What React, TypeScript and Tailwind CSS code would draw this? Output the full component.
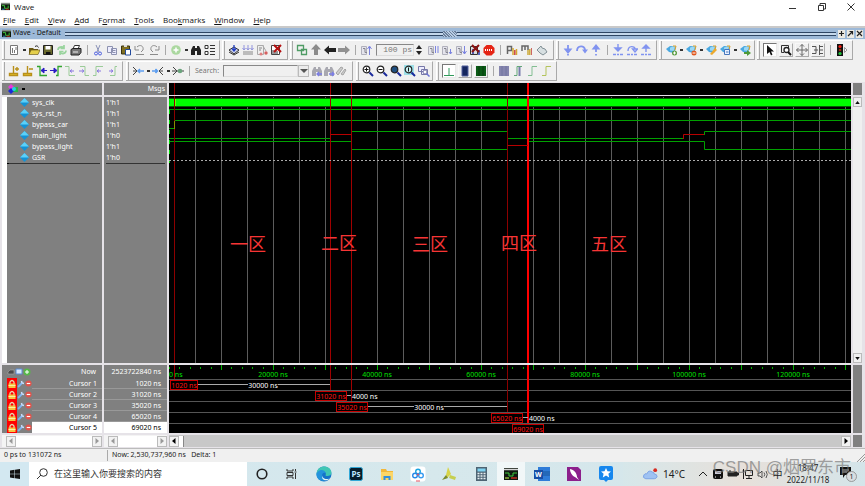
import type { ReactNode } from 'react';

const sans = 'font-["Noto_Sans","Noto_Sans_CJK_SC",sans-serif]';
const uiSans = 'font-["Open_Sans","Noto_Sans_CJK_SC",sans-serif]';

const menus = ['File', 'Edit', 'View', 'Add', 'Format', 'Tools', 'Bookmarks', 'Window', 'Help'];
const menuKeys = [0, 0, 0, 0, 1, 0, 3, 0, 0];

const signals = [
  { name: 'sys_clk', value: "1'h1" },
  { name: 'sys_rst_n', value: "1'h1" },
  { name: 'bypass_car', value: "1'h1" },
  { name: 'main_light', value: "1'h0" },
  { name: 'bypass_light', value: "1'h1" },
  { name: 'GSR', value: "1'h0" },
];

const cursors = [
  { name: 'Cursor 1', time: 1020 },
  { name: 'Cursor 2', time: 31020 },
  { name: 'Cursor 3', time: 35020 },
  { name: 'Cursor 4', time: 65020 },
  { name: 'Cursor 5', time: 69020 },
];

const zones = [
  { text: '一区', x: 61, y: 168 },
  { text: '二区', x: 152, y: 167 },
  { text: '三区', x: 243, y: 168 },
  { text: '四区', x: 332, y: 167 },
  { text: '五区', x: 422, y: 168 },
];

const gridTimes = Array.from({ length: 26 }, (_, i) => (i + 1) * 5000);
const tickTimes = Array.from({ length: 66 }, (_, i) => i * 2000);
const bigTimes = Array.from({ length: 13 }, (_, i) => (i + 1) * 10000);
const labelTimes = [20000, 40000, 60000, 80000, 100000, 120000];

// time in ns to pixels
const px = (t: number) => Math.round(t * 0.0052);

const flag = (
  <>
    <path d="M1 5 5 2l6 .5L9 9 4 8z" fill="#4aa8e0" />
    <path d="M5 3.5 10 2l-1 5-4-.5z" fill="#9bd8f5" />
    <path d="M8 2h3l-1 4" fill="none" stroke="#d8a02a" />
  </>
);
const sheet = (
  <>
    <path d="M1.5 2.5h5v8h-5z" fill="#e4e4ec" stroke="#b0b0bc" />
    <path d="M3 4.500h2v4h2" fill="none" stroke="#85858f" />
  </>
);
const lens = (fill: string) => (
  <>
    <circle cx="4.500" cy="4.500" r="3.300" fill={fill} stroke="#222" strokeWidth="1.200" />
    <path d="m7.500 7.500 3.500 3.500" stroke="#1a2a9c" strokeWidth="2" />
  </>
);
const base = <path d="M1 10.500h3M5 10.500h2M8 10.500h3" stroke="#8093f0" strokeWidth="1.600" />;
const bino = (c: string) => <path d="M1 11V6l2-4h2v2h2V2h2l2 4v5H7V7H5v4z" fill={c} />;

const icons: Record<string, ReactNode> = {
  New: <><path d="M2.500 1.500h7v9h-7z" fill="#fff" stroke="#777" /><path d="M4.500 4v5M6.500 6v3M8 3v3" stroke="#777" /></>,
  Open: <><path d="M1 4h4l1 1h4v5H1z" fill="#6b5a12" /><path d="M3 6h9l-2 4.500H1z" fill="#e4cf4c" stroke="#5a4a10" strokeWidth=".6" /><path d="M7 2.500c2-1.500 3 0 3.500 1" fill="none" stroke="#222" /></>,
  Save: <><path d="M1.500 1.500h9v9h-9z" fill="#68682c" stroke="#222" /><path d="M3.500 2h5v3.500h-5z" fill="#fff" /><path d="M4 8h4.500v2.500H4z" fill="#111" /></>,
  Refresh: <path d="M2 6c0-3 4-4 6-2M10 6.500c0 3-4 4-6 2M8 1v3.500H4.500M4 11V7.500h3.500" fill="none" stroke="#9ad49e" strokeWidth="1.700" />,
  Print: <><path d="M3 5 4.500 1.500h5L8 5" fill="#fff" stroke="#333" /><path d="M1 5.500 3 4.500h8v4L9 11H1z" fill="#777" stroke="#222" /><path d="M3 8h5" stroke="#eee" /></>,
  Cut: <><path d="m4 1 3 7M8 1 5 8" stroke="#8b93b8" /><circle cx="4" cy="9.500" r="1.500" fill="none" stroke="#4d5fe0" /><circle cx="8" cy="9.500" r="1.500" fill="none" stroke="#4d5fe0" /></>,
  Copy: <path d="M1.500 2.500h5v6h-5zM5.500 4.500h5v6h-5zM7 6.500h2.500M7 8.500h2.500" fill="#eef" stroke="#8d92b0" />,
  Paste: <><path d="M1.500 2h8v8h-8z" fill="#807020" stroke="#3a3410" /><path d="M4 1h3v2H4z" fill="#ddd" /><path d="M5.500 5.500h5v5.500h-5z" fill="#fff" stroke="#224a9c" /></>,
  Undo: <path d="M3 3c3-3 7-1 6 3L7 8M1 2v4h4M2 10.500h8" fill="none" stroke="#8b8b8b" />,
  Redo: <path d="M9 3C6 0 2 2 3 6l2 2M11 2v4H7M2 10.500h8" fill="none" stroke="#8b8b8b" />,
  'Add item': <><circle cx="6" cy="6" r="4.800" fill="#abd8a0" /><path d="M6 3.500v5M3.500 6h5" stroke="#fff" strokeWidth="1.500" /></>,
  Find: bino('#222'),
  Collapse: <><path d="M1 1.500h3v3H1zM1 7.500h3v3H1z" fill="#fff" stroke="#333" /><path d="M6 1.500h5M6 4.500h5M6 7.500h5M6 10.500h5" stroke="#333" /></>,
  Compile: <><path d="m1 6 5-3 5 3-5 4z" fill="#ccd2ea" stroke="#333" /><path d="m1 8 5 3 5-3" fill="none" stroke="#333" /><path d="M6 1v5M4 4.500 6 7l2-2.500" stroke="#223fc4" fill="none" strokeWidth="1.300" /></>,
  'Compile all': <><path d="M2 1v5M6 1v5M10 1v5M.500 4 2 6l1.500-2M4.500 4 6 6l1.500-2M8.500 4 10 6l1.500-2" stroke="#9294dd" fill="none" /><path d="M1 8h10M1 10h10" stroke="#aaa" strokeWidth="1.300" /></>,
  Simulate: <><path d="M1.500 1.500h6v9h-6z" fill="#eee" stroke="#aaa" /><path d="M3 4h3M3 6h2" stroke="#888" /><circle cx="5" cy="10" r="1.500" fill="#e08080" /><circle cx="10" cy="9" r="1.700" fill="#d46060" /><path d="m7 2 3 5" stroke="#aaa" /></>,
  Break: <><path d="M1.500 1.500h8v9h-8z" fill="#fff" stroke="#444" /><path d="M3 6v4M5 7v3M7 7v3" stroke="#333" /><path d="m4 1 7 7M11 1 4 8" stroke="#b41010" strokeWidth="2" /></>,
  Environment: <path d="M1.500 1.500h6v5h-6zM5.500 5.500h5v5h-5z" fill="none" stroke="#4f9c65" strokeWidth="1.300" />,
  Up: <path d="M6 0 1 5.500h3V11h4V5.500h3z" fill="#8b8b8b" />,
  Back: <path d="M0 6 5 1.500V4h7v4H5v2.500z" fill="#222" />,
  Forward: <path d="M12 6 7 1.500V4H0v4h7v2.500z" fill="#919191" />,
  Restart: <>{sheet}<path d="M9.500 11V3M7.500 5l2-3 2 3" fill="none" stroke="#7b83e0" /></>,
  Run: <>{sheet}<path d="M8.500 2v7M11 2v7" stroke="#7b83e0" /></>,
  'Continue run': <>{sheet}<path d="M9.500 5v5M8 8l1.500 2L11 8" fill="none" stroke="#7b83e0" /></>,
  'Run all': <>{sheet}<path d="M9.500 2v8M7.500 7l2 3 2-3" fill="none" stroke="#7b83e0" /></>,
  'Break run': <><path d="M1.500 2.500h7v8h-7z" fill="#ddd" stroke="#333" /><path d="M10 6v5M4 5v5" stroke="#2638b0" strokeWidth="1.500" /><path d="m3 1 7 7M10 1 3 8" stroke="#8b1212" strokeWidth="2" /></>,
  Stop: <><path d="M3.500 1h5L11.500 4v4.500l-3 3h-5l-3-3V4z" fill="#e52415" /><path d="M2.500 5v2M4.500 5v2M6.500 5v2M8.500 5v2" stroke="#fff" /></>,
  'Performance profile': <><path d="M1.500 10V2.500h4v4h-4" fill="none" stroke="#666" strokeWidth="1.500" /><path d="M7 4v7M10.500 5v6" stroke="#d3a830" strokeWidth="1.500" /><path d="M8.800 6v5" stroke="#c44" strokeWidth="1.500" /></>,
  'Memory profile': <><path d="M1 7V2h6v4M4 2v4" fill="none" stroke="#666" strokeWidth="1.500" /><path d="M7 6v5M8.800 5v6" stroke="#cdaa3a" strokeWidth="1.500" /><path d="M10.500 4v7" stroke="#c66" /></>,
  'Edit hand': <path d="m1 6 4-4 1 2 3 1 2 3-4 3-3-2z" fill="#d7dfe1" stroke="#829096" />,
  'Step in': <path d="M6 1v7M3.500 5.500 6 8.500l2.500-3zM6 10v1.500" fill="#8093f0" stroke="#8093f0" strokeWidth="1.800" />,
  'Step over': <><path d="M1 7c0-6 8-6 8-1" fill="none" stroke="#8093f0" strokeWidth="1.800" /><path d="M6 5.500h6L9 9.500z" fill="#8093f0" /></>,
  'Step out': <path d="M6 8V4M3.500 4.500 6 1.500l2.500 3zM6 10v1.500" fill="#8093f0" stroke="#8093f0" strokeWidth="1.800" />,
  'Step in current': <>{base}<path d="M6 0v6M3 4l3 3 3-3z" fill="#8093f0" stroke="#8093f0" strokeWidth="1.400" /></>,
  'Step over current': <>{base}<path d="M2 7c0-6 7-5 7-2M6.500 5h5L9 8z" fill="none" stroke="#8093f0" strokeWidth="1.400" /></>,
  'Step out current': <>{base}<path d="M6 8V3M3 4l3-3 3 3z" fill="#8093f0" stroke="#8093f0" strokeWidth="1.400" /></>,
  'Add bookmark': <>{flag}<circle cx="9.500" cy="9" r="2.500" fill="#579a3c" /><path d="M9.500 7.500v3M8 9h3" stroke="#fff" /></>,
  'Delete bookmark': <>{flag}<circle cx="9" cy="9" r="2.500" fill="#e0561c" /><path d="M7.500 9h3" stroke="#fff" /></>,
  'Edit bookmark': <>{flag}<path d="m5 10 5-6 2 2-5 5z" fill="#eda92d" /></>,
  'Manage bookmarks': <>{flag}<path d="M5.500 5.500h5v5h-5z" fill="#eaf2ff" stroke="#4877bc" /><path d="M7 8h2.500" stroke="#4877bc" /></>,
  'Jump to bookmark': <>{flag}<path d="M5 8h3V6l4 3-4 3v-2H5z" fill="#4d9938" /></>,
  Select: <path d="M3 1v9l2.500-2L7 11.500l1.500-1L7 7.500h3z" fill="#111" />,
  'Zoom mode': <><path d="M1.500 1.500h7M1.500 1.500v7M8.500 4V1.500M4 8.500H1.500" stroke="#333" fill="none" /><circle cx="6.500" cy="6" r="2.500" fill="#fff" stroke="#222" strokeWidth="1.300" /><path d="m8 8 3 3" stroke="#111" strokeWidth="2" /></>,
  'Pan mode': <path d="M6 .500v11M.500 6h11M4 2.500l2-2 2 2M4 9.500l2 2 2-2M2.500 4l-2 2 2 2M9.500 4l2 2-2 2" fill="none" stroke="#666" />,
  'Edit mode': <path d="M0 2.500h4v7H0M2 6h4M7.500 1v10M8 2.500h3M8 6h3M8 9.500h3" fill="none" stroke="#555" />,
  'Stop drawing': <><path d="M1 0h6v12H1z" fill="#111" /><circle cx="4" cy="2.500" r="1.600" fill="#f21d12" /><circle cx="4" cy="9.500" r="1.600" fill="#20c33c" /><circle cx="4" cy="6" r="1.300" fill="#9b2c0c" /><path d="m8.500 3.500 2.500 2.500-2.500 2.500z" fill="#fff" stroke="#777" strokeWidth=".7" /></>,
  'Insert cursor': <path d="M1.500 8.500h8v2h-8zM5.500 8V1M7 4h4M9 2v4" fill="#f2cf2e" stroke="#b8901a" strokeWidth="1.400" />,
  'Delete cursor': <path d="M1.500 8.500h8v2h-8zM5.500 8V1M7 4h4" fill="#f2cf2e" stroke="#b8901a" strokeWidth="1.400" />,
  'Previous transition': <><path d="M1 1.500h3v9h7" fill="none" stroke="#31a52d" strokeWidth="1.300" /><path d="M5 5.500h6M8 3 5 5.500 8 8z" fill="#2b1cc4" stroke="#2b1cc4" /></>,
  'Next transition': <><path d="M6 10.500h2v-9h4" fill="none" stroke="#31a52d" strokeWidth="1.300" /><path d="M0 5.500h6M4 3l3 2.500L4 8z" fill="#2b1cc4" stroke="#2b1cc4" /></>,
  'Previous falling edge': <><path d="M1 1.500h4v9h6" fill="none" stroke="#9bcb98" /><path d="M6 6h4M8 4.500 6 6l2 1.500" fill="none" stroke="#8a78e0" /></>,
  'Next falling edge': <><path d="M2 1.500h5v9h4" fill="none" stroke="#9bcb98" /><path d="M1 6h4M4 4.500 6 6 4 7.500" fill="none" stroke="#8a78e0" /></>,
  'Previous rising edge': <><path d="M1 10.500h3v-9h7" fill="none" stroke="#9bcb98" /><path d="M5 6h4M7 4.500 5 6l2 1.500" fill="none" stroke="#8a78e0" /></>,
  'Next rising edge': <><path d="M4 10.500h5v-9h2" fill="none" stroke="#9bcb98" /><path d="M3 6h4M5 4.500 7 6 5 7.500" fill="none" stroke="#8a78e0" /></>,
  'Expand drivers': <><path d="m1 2 4 4-4 4M1 6h4" fill="none" stroke="#444" /><path d="M6 6h6M8 4 6 6l2 2" fill="#5c9df0" stroke="#5c9df0" strokeWidth="1.500" /></>,
  'Expand readers': <><path d="M11 2 7 6l4 4M11 6H7" fill="none" stroke="#444" /><path d="M0 6h5M3.500 4l2 2-2 2" fill="#5c9df0" stroke="#5c9df0" strokeWidth="1.500" /></>,
  'Expand net': <><path d="m1 2 4 4-4 4M0 6h12" fill="none" stroke="#444" /><circle cx="8" cy="6" r="2.300" fill="#6aa37c" /></>,
  'Find previous': <>{bino('#a8a8b0')}<path d="M6 9h5M8 7 6 9l2 2" fill="none" stroke="#7b7de6" strokeWidth="1.300" /></>,
  'Find next': <>{bino('#a8a8b0')}<path d="M6 9h5M9 7l2 2-2 2" fill="none" stroke="#7b7de6" strokeWidth="1.300" /></>,
  'Search options': <path d="m1 8 5-6 2 1-5 7zM6 9l4-5 1 1-3 5z" fill="#ccc" stroke="#a5a5a5" />,
  'Zoom in': <>{lens('#fff')}<path d="M4.500 2.500v4M2.500 4.500h4" stroke="#111" /></>,
  'Zoom out': <>{lens('#fff')}<path d="M2.500 4.500h4" stroke="#111" /></>,
  'Zoom full': lens('#1f4f80'),
  'Zoom on cursor': <><path d="M0 0h10v10H0z" fill="#9de0e8" />{lens('#c8f3f5')}<path d="M4.500 2.500v4" stroke="#111" /></>,
  'Zoom between': <><path d="M.500 1.500h6v5h-6zM3.500 4.500h6v5h-6z" fill="#eef" stroke="#7778a8" /><circle cx="7" cy="7" r="2" fill="#fff" stroke="#7778a8" /><path d="m8.500 8.500 3 3" stroke="#6c74d4" strokeWidth="1.500" /></>,
  'Show cursor': <path d="M1 10.500h10M6 3v7" stroke="#2f9a5a" fill="none" />,
  'Two cursors': <path d="M3 1h6v10H3z" fill="#152760" stroke="#52609c" />,
  'Full wave': <><path d="M1 1h10v10H1z" fill="#0a5a16" /><path d="M4 1v10M8 1v10" stroke="#063c0c" /></>,
  'Shaded wave': <><path d="M1 1h10v10H1z" fill="#8585ae" /><path d="M4 1v10M8 1v10" stroke="#7276a0" /></>,
  'Edge blue': <><path d="M2 10.500h3v-9h5" fill="none" stroke="#63a779" /><path d="M7.500 2v9" stroke="#787dac" strokeWidth="2" /></>,
  'Edge green': <path d="M2 10.500h4v-9h5" fill="none" stroke="#83be92" />,
  'Edge yellow': <path d="M2 10.500h4v-9h5" fill="none" stroke="#b3c35b" />,
};

function Icon({ name }: { name: string }) {
  return (
    <svg viewBox="0 0 12 12" className="w-[12px] h-[12px] shrink-0" aria-hidden="true">
      {icons[name]}
    </svg>
  );
}

// '|' is a separator, 'v' a small drop-down arrow
function Tools({ items, size = 'w-[14px]', boxed }: { items: string[]; size?: string; boxed?: boolean }) {
  return (
    <>
      {items.map((item, i) => {
        if (item === '|') {
          return (
            <span key={i} className="w-[8px] flex justify-center shrink-0">
              <span className="w-px h-[10px] bg-[#a8a8a8]" />
            </span>
          );
        }
        if (item === 'v') {
          return (
            <button key={i} aria-label="More" className="w-[6px] h-[12px] flex items-center justify-center shrink-0">
              <span className="w-[3px] h-[2px] bg-[#333]" />
            </button>
          );
        }
        return (
          <button key={i} aria-label={item} title={item} className={`${size} h-[14px] flex items-center justify-center shrink-0`}>
            <span
              className={
                boxed && item !== 'Stop drawing'
                  ? `w-[14px] h-[14px] flex items-center justify-center border ${
                      item === 'Select' || item === 'Show cursor'
                        ? 'bg-white border-[#e8e8e8] border-l-[#777] border-t-[#777]'
                        : 'border-[#f8f8f8] border-r-[#aaa] border-b-[#aaa]'
                    }`
                  : 'flex'
              }
            >
              <Icon name={item} />
            </span>
          </button>
        );
      })}
    </>
  );
}

function Group({ width, children }: { width: string; children: ReactNode }) {
  return (
    <div role="toolbar" className={`${width} h-[20px] flex items-center shrink-0 border-r border-b border-[#a9a9a9] border-t border-t-white`}>
      <span className="w-[3px] h-[18px] mr-[2px] border-x border-l-white border-r-[#a9a9a9] shrink-0" />
      {children}
    </div>
  );
}

function HScroll({ dark }: { dark?: boolean }) {
  const btn = 'w-[10px] h-[11px] flex items-center justify-center bg-[#f2f2f2] border border-[#bbb] shrink-0';
  const color = dark ? '#000' : '#999';
  return (
    <div className={`flex items-center h-[12px] ${dark ? 'bg-[#c8c8c8]' : 'bg-[#f4f4f4]'}`}>
      <button aria-label="Scroll left" className={`${btn} ${dark ? '' : 'ml-[4px]'}`}>
        <svg viewBox="0 0 6 6" className="w-[6px] h-[6px]"><path d="M4.500 0v6L1 3z" fill={color} /></svg>
      </button>
      {dark && <span className="w-[5px] h-[11px] bg-white border-r border-[#888]" />}
      <span className={`flex-1 h-[11px] ${dark ? '' : 'bg-white'}`} />
      <button aria-label="Scroll right" className={btn}>
        <svg viewBox="0 0 6 6" className="w-[6px] h-[6px]"><path d="M1.500 0v6L5 3z" fill={color} /></svg>
      </button>
    </div>
  );
}

function AppIcon() {
  return (
    <svg viewBox="0 0 10 10" className="w-[9px] h-[9px] shrink-0" aria-hidden="true">
      <path d="M0 1h10v8H0z" fill="#0c1a0c" />
      <path d="M0 2h10" stroke="#c9d5c9" />
      <path d="M1 4h3v3h4V4" fill="none" stroke="#3fcf3f" />
      <path d="M5 8h4" stroke="#c22" />
      <path d="M1 8h3" stroke="#38c" />
    </svg>
  );
}

function Cursors() {
  return (
    <>
      <path d={`M${px(31020)}.500 0V2000M${px(35020)}.500 0V2000`} stroke="#a00000" />
      <path d={`M${px(65020)}.500 0V2000`} stroke="#8c0000" />
      <path d={`M${px(69020)} 0V2000`} stroke="#ff0000" strokeWidth="2" />
      <path d={`M${px(1020)}.500 0V2000`} stroke="#8c0000" />
    </>
  );
}

function WavePane() {
  return (
    <div className="row-span-2 min-w-0 relative bg-black overflow-hidden">
      <svg width="100%" height="100%" className="absolute inset-0" role="img" aria-label="Waveforms">
        <g stroke="#5c5c5c">
          {gridTimes.map((t) => (
            <path key={t} d={`M${px(t)}.500 14V2000`} />
          ))}
        </g>
        <rect x="0" y="16" width="100%" height="7" fill="#00ff00" />
        <path d="M0 15.500H4000M0 23.500H4000" stroke="#006000" />
        <path d="M6 16v7M161.500 16v7M359 16v7" stroke="#e0ff00" />
        <g fill="none" stroke="#00a000">
          <path d="M0 26.500H4000" />
          <path d="M0 45.500H5.500V37.500H4000" />
          <path d="M0 55.500H161M182.500 68V48.500H338.500V67M338 55.500H514.500M535.500 52V48.500H4000" />
          <path d="M0 58.500H182.500V66.500H338M359.500 63V58.500H535.500V66.500H4000" />
        </g>
        <Cursors />
        <path d="M161.500 51.500H182M338.500 62.500H359M514.500 56V51.500H535" fill="none" stroke="#b80000" />
        <path d="M5.500 38v8" stroke="#8a8a00" />
        <path d="M.500 17V80" stroke="#00e000" strokeDasharray="4 6" />
        <path d="M0 77.500H4000" stroke="#aaa" strokeDasharray="2 2" />
        <path d="M0 12.500H4000" stroke="#e8e0ea" />
        {zones.map((z) => (
          <text key={z.text} x={z.x} y={z.y} fontSize="18" fill="#f73535" className='font-["Noto_Sans_CJK_SC",sans-serif]'>
            {z.text}
          </text>
        ))}
      </svg>
    </div>
  );
}

function Span({ from, to, start, y, label }: { from: number; to: number; start: number; y: number; label: string }) {
  const mid = Math.round((px(from) + px(to)) / 2) + (from > 10000 ? 0 : 11);
  const short = to - from < 10000;
  return (
    <>
      <path d={`M${start} ${y - 4}.500H${px(to)}`} stroke="#aaa" />
      {!short && <rect x={mid - 15} y={y - 7} width="30" height="8" fill="#000" />}
      <text x={short ? px(to) + 1 : mid} y={y} textAnchor={short ? 'start' : 'middle'} fontSize="7" fill="#fff">
        {label}
      </text>
    </>
  );
}

function CursorPane() {
  const boxes = [1, 146, 167, 322, 343];
  const widths = [27, 31, 31, 31, 31];
  return (
    <div className="min-w-0 relative bg-black overflow-hidden">
      <svg width="100%" height="100%" className="absolute inset-0" role="img" aria-label="Cursor timeline">
        <path d="M0 14.500H4000M0 25.500H4000M0 36.500H4000M0 47.500H4000M0 58.500H4000" stroke="#555" />
        <path d="M5.500 0V14M161.500 0V25M182.500 0V36" stroke="#a00000" />
        <path d="M338.500 0V47" stroke="#8c0000" />
        <path d="M359 0V58" stroke="#ff0000" strokeWidth="2" />
        <g stroke="#00b000">
          {tickTimes.map((t) => (
            <path key={t} d={`M${px(t)}.500 2V4`} />
          ))}
          {bigTimes.map((t) => (
            <path key={t} d={`M${px(t)}.500 0V5`} />
          ))}
        </g>
        <g fontSize="7" fill="#00e000" textAnchor="middle">
          <text x="0" y="12" textAnchor="start">0 ns</text>
          {labelTimes.map((t) => (
            <text key={t} x={px(t)} y="12">{t} ns</text>
          ))}
        </g>
        <Span from={1020} to={31020} start={28} y={23} label="30000 ns" />
        <Span from={31020} to={35020} start={177} y={34} label="4000 ns" />
        <Span from={35020} to={65020} start={198} y={45} label="30000 ns" />
        <Span from={65020} to={69020} start={354} y={56} label="4000 ns" />
        {cursors.map((c, i) => (
          <g key={c.name}>
            <rect x={boxes[i] + 0.5} y={i * 11 + 15.5} width={widths[i]} height="9" fill="#000" stroke="#c80000" />
            <text x={boxes[i] + 15 - (i === 0 ? 1 : -1)} y={i * 11 + 23} textAnchor="middle" fontSize="7" fill="#ff1010">
              {c.time} ns
            </text>
          </g>
        ))}
      </svg>
    </div>
  );
}

function CursorTools() {
  return (
    <span className="flex items-center h-full">
      <button aria-label="Lock cursor" className="w-[10px] h-full bg-[#ff0000] flex items-center justify-center">
        <svg viewBox="0 0 10 10" className="w-[10px] h-[10px]">
          <path d="M3 5V3q2-3 4 0v2" fill="none" stroke="#e6d9b0" strokeWidth="1.300" />
          <path d="M1.500 4.500h7v4.500h-7z" fill="#f6c443" />
          <path d="M1.500 6.500h7" stroke="#fff0a0" />
        </svg>
      </button>
      <button aria-label="Edit cursor" className="w-[8px] flex justify-center">
        <svg viewBox="0 0 8 8" className="w-[8px] h-[8px]">
          <path d="M1 7 5 3" stroke="#7db2f0" strokeWidth="1.800" />
          <path d="M4.500 1 5 3l2 .500" fill="none" stroke="#c9e0ff" strokeWidth="1.500" />
        </svg>
      </button>
      <button aria-label="Remove cursor" className="w-[7px] flex justify-center">
        <svg viewBox="0 0 8 8" className="w-[7px] h-[7px]">
          <circle cx="4" cy="4" r="3.500" fill="#e2524a" />
          <path d="M2 4h4" stroke="#fff" strokeWidth="1.300" />
        </svg>
      </button>
    </span>
  );
}

const taskIcons: { name: string; width: string; active?: boolean; art: ReactNode }[] = [
  { name: 'Cortana', width: 'w-[30px]', art: <circle cx="8" cy="8" r="4.800" fill="none" stroke="#222" strokeWidth="1.600" /> },
  { name: 'Task view', width: 'w-[30px]', art: <path d="M3 3v2h6V3M3 6.500h6v3H3zM3 13v-2h6v2M11.500 3v2M11.500 7v6M10.500 6h2" fill="none" stroke="#333" /> },
  {
    name: 'Edge', width: 'w-[34px]',
    art: <><circle cx="8" cy="8" r="7.500" fill="#1573c9" /><path d="M.500 8C1-2 15-1.500 15.500 6.500c0 4-5 4-6 3 2-5-5-6-9-1.500z" fill="#3fc6b4" /><path d="M.500 8C2 2.500 9 3 9.500 7c-4-1-5 4 0 6.500C6 17 0 13 .500 8z" fill="#2393dc" /><path d="M6.500 9c-1 3 3 5 7 3.500-2 3-9 2.500-7-3.500z" fill="#e4f2f4" /></>,
  },
  {
    name: 'Photoshop', width: 'w-[30px]',
    art: <><rect x="1.500" y="1.500" width="13" height="13" rx="2" fill="#071e2d" stroke="#31a8d8" /><text x="8" y="11" fontSize="8" fontWeight="700" fill="#bfe8ff" textAnchor="middle">Ps</text></>,
  },
  { name: 'Files', width: 'w-[31px]', art: <><path d="M2 3h5l1 2h6v9H2z" fill="#f2b73a" /><path d="M2 6h12v8H2z" fill="#fcd667" /><path d="M4.500 14v-4h7v4h-2v-2h-3v2z" fill="#3390dc" /></> },
  { name: 'Baidu Netdisk', width: 'w-[32px]', art: <><rect x=".500" y=".500" width="15" height="15" rx="3" fill="#fff" /><circle cx="8" cy="5.500" r="2.300" fill="none" stroke="#1ba4e0" strokeWidth="1.400" /><circle cx="5" cy="9.500" r="2.300" fill="none" stroke="#2688e8" strokeWidth="1.400" /><circle cx="11" cy="9.500" r="2.300" fill="none" stroke="#3a9cf0" strokeWidth="1.400" /><circle cx="8" cy="8.500" r="1" fill="#e65060" /><path d="M6 15h4" stroke="#e65060" /></> },
  { name: 'Vivado', width: 'w-[30px]', art: <><path d="m7 1 3 7-4 4-1-3z" fill="#d8d448" /><path d="m9 9 6 2-1 3-6-2z" fill="#c6cf50" /><path d="m1 14 4-5 2 3z" fill="#7b8b2c" /></> },
  { name: 'Calculator', width: 'w-[33px]', art: <><path d="M3 1h11v14H3z" fill="#4e6473" /><path d="M4.500 2.500h8v3h-8z" fill="#7fd3f2" /><path d="M4.500 7.500h8M4.500 10h8M4.500 12.500h8" stroke="#e7eef2" strokeDasharray="2 1" strokeWidth="1.500" /></> },
  { name: 'ModelSim', width: 'w-[28px]', active: true, art: <><path d="M1 2h14v12H1z" fill="#10180f" /><path d="M1 3.500h14" stroke="#d5d5d5" strokeWidth="1.500" /><path d="M2 7h4v3h4V7h4" fill="none" stroke="#3dca3d" /><path d="M8 12h6" stroke="#c02d20" strokeWidth="1.500" /><path d="M2 12h4" stroke="#8bb43b" strokeWidth="1.500" /></> },
  { name: 'Word', width: 'w-[34px]', art: <><path d="M4 1h12v14H4z" fill="#2f7cd8" /><path d="M4 5h12v5H4z" fill="#2368b8" /><path d="M0 4h9v9H0z" fill="#174ea6" /><text x="4.500" y="11" fontSize="7" fontWeight="700" fill="#fff" textAnchor="middle">W</text></> },
  { name: 'Feather', width: 'w-[30px]', art: <><path d="M1 1h11l3 3v11H1z" fill="#8c1f8c" /><path d="M4 3c5 1 7 5 7 8l2 3-4-3C6 10 4 6 4 3z" fill="#fff" /></> },
  { name: 'Star', width: 'w-[34px]', art: <><rect x="1" y="0" width="14" height="14" rx="2" fill="#1687ee" /><path d="M5 13h6l-3 3z" fill="#1687ee" /><path d="m8 2 1.500 3.200 3.500.300-2.600 2.300.8 3.600L8 9.500l-3.200 1.900.8-3.600L3 5.500l3.500-.300z" fill="#fff" /></> },
];

const trayIcons: { name: string; art: ReactNode }[] = [
  { name: 'Show hidden icons', art: <path d="m2 8 4-4 4 4" fill="none" stroke="#222" /> },
  { name: 'Bus', art: <><rect x="1" y="1" width="10" height="10" rx="2" fill="#111" /><path d="M3 3h6v3H3z" fill="#ccd" /><path d="M3 9h1M8 9h1" stroke="#fff" /></> },
  { name: 'Battery', art: <path d="M1 4h9v4H1zM10 5h1.500v2H10M3 2v3" fill="#222" stroke="#222" /> },
  { name: 'Network', art: <path d="M3.500 2.500h7v5h-7zM7 8v2.500M4 10.500h6M1.500 1v10M.500 3h2" fill="none" stroke="#222" /> },
  { name: 'Volume', art: <path d="M1 5v3h2l2 2V3L3 5zM7 4.500q1.500 2 0 4M9 3q2.500 3.500 0 7" fill="none" stroke="#333" strokeWidth=".8" /> },
];

function TaskBar() {
  return (
    <footer className="h-[24px] flex items-stretch bg-linear-to-r from-[#d3e7ef] via-[#d6e8ec] to-[#d4e5ea] shrink-0 relative">
      <button aria-label="Start" className="w-[29px] flex items-center justify-center bg-[#d3e8f1] shrink-0">
        <svg viewBox="0 0 10 10" className="w-[10px] h-[10px]">
          <path d="m0 1.500 4.500-.700v4H0zM5 .700 10 0v4.800H5zM0 5.300h4.500v4L0 8.600zM5 5.300h5V10l-5-.700z" fill="#111" />
        </svg>
      </button>
      <label className="w-[218px] flex items-center bg-white pl-[7px] gap-[6px] shrink-0">
        <svg viewBox="0 0 12 12" className="w-[12px] h-[12px]" aria-hidden="true">
          <circle cx="7.500" cy="4.500" r="3.800" fill="none" stroke="#333" />
          <path d="m1 11 4-4" stroke="#333" />
        </svg>
        <input
          aria-label="搜索"
          placeholder="在这里输入你要搜索的内容"
          className='w-[150px] text-[9px] bg-transparent outline-none placeholder:text-[#333] font-["Noto_Sans_CJK_SC",sans-serif]'
        />
      </label>
      <nav className="flex shrink-0">
        {taskIcons.map((t) => (
          <button key={t.name} aria-label={t.name} className={`${t.width} flex items-center justify-center ${t.active ? 'bg-[#f1f7f8]' : ''}`}>
            <svg viewBox="0 0 16 16" className="w-[16px] h-[16px]">{t.art}</svg>
          </button>
        ))}
      </nav>
      <div className="flex-1 flex items-center justify-end bg-linear-to-r from-[#d6e7ea] via-[#e7e0da] to-[#d4e5ea] min-w-0">
        <button className="flex items-center gap-[4px] mr-[10px] text-[10px] text-[#222] shrink-0">
          <svg viewBox="0 0 18 14" className="w-[17px] h-[14px]" aria-hidden="true">
            <path d="M4 12q-4-1-2-4 1-2 3-1 2-5 6-2 2 0 2 2 3 0 3 3-1 2-3 2z" fill="#9fc2f2" stroke="#7ba3e4" />
            <circle cx="14" cy="3" r="2" fill="#d62a20" />
          </svg>
          14°C
        </button>
        {trayIcons.map((t) => (
          <button key={t.name} aria-label={t.name} className="w-[15px] flex justify-center shrink-0">
            <svg viewBox="0 0 12 12" className="w-[12px] h-[12px]">{t.art}</svg>
          </button>
        ))}
        <button className="w-[15px] text-[10px] text-[#222] shrink-0">中</button>
        <div className="w-[46px] text-center text-[8px] leading-[12px] text-[#222] whitespace-nowrap shrink-0">
          <div>18:47</div>
          <div>2022/11/18</div>
        </div>
        <button aria-label="Notifications" className="w-[26px] mr-[8px] flex justify-end shrink-0">
          <svg viewBox="0 0 18 16" className="w-[18px] h-[16px]">
            <path d="M1 1h11v8H6l-2 3V9H1z" fill="#111" />
            <path d="M3 4h7M3 6h5" stroke="#ddd" strokeWidth=".8" />
            <circle cx="12.500" cy="10.500" r="5" fill="#d8dde0" stroke="#888" strokeWidth=".8" />
            <text x="12.500" y="13" fontSize="7" textAnchor="middle" fill="#222">1</text>
          </svg>
        </button>
      </div>
      <div className='absolute right-[14px] bottom-[7px] text-[17px] leading-[22px] text-[#7a7a7a]/70 whitespace-nowrap pointer-events-none font-["Liberation_Sans","Noto_Sans_CJK_SC",sans-serif]'>
        CSDN @烟罘东市
      </div>
    </footer>
  );
}

export default function App() {
  return (
    <div className={`min-h-screen flex flex-col bg-[#f0f0f0] overflow-hidden text-[#111] ${sans}`}>
      {/* Title bar */}
      <header className={`h-[13px] flex items-center bg-white pl-[1px] gap-[4px] text-[8px] shrink-0 ${uiSans}`}>
        <AppIcon />
        <h1>Wave</h1>
        <div className="ml-auto flex">
          {['M1 6.500h7', 'M1.500 3.500h5v5h-5zM3 3V1.500h5.500V7H7', 'm1.500 1.500 7 7M8.500 1.500l-7 7'].map((d, i) => (
            <button key={d} aria-label={['Minimize', 'Restore', 'Close'][i]} className="w-[29px] h-[13px] flex items-center justify-center">
              <svg viewBox="0 0 10 10" className="w-[10px] h-[10px]">
                <path d={d} fill="none" stroke="#333" />
              </svg>
            </button>
          ))}
        </div>
      </header>

      {/* Menu */}
      <nav className={`h-[13px] flex items-center bg-white pl-[3px] gap-[9px] text-[8px] leading-[13px] shrink-0 ${uiSans}`}>
        {menus.map((m, i) => (
          <button key={m}>
            {m.slice(0, menuKeys[i])}
            <u>{m[menuKeys[i]]}</u>
            {m.slice(menuKeys[i] + 1)}
          </button>
        ))}
      </nav>

      {/* Dock header */}
      <div className="h-[14px] flex items-center bg-[#9db9d8] border-t-2 border-t-[#c9c9c9] border-b border-b-[#e8eef5] pl-[2px] gap-[2px] text-[7px] shrink-0">
        <AppIcon />
        <h2>Wave - Default</h2>
        <span className="flex-1 h-[4px] ml-[2px] border-y border-[#2f4664] bg-[#c5d8ec] flex items-center justify-center">
          <span className="w-[14px] h-[6px] shrink-0 bg-[repeating-linear-gradient(45deg,#6c819c_0_1px,#b9cde4_1px_2px)]" />
        </span>
        <div className="flex gap-[2px] pr-[2px]">
          {['M3.500 1v5M1 3.500h5', 'M1 6l4-4M2.500 1.500h3v3', 'm1 1 5 5M6 1 1 6'].map((d, i) => (
            <button key={d} aria-label={['Add tab', 'Undock', 'Close pane'][i]} className="w-[7px] h-[8px] bg-[#ece9e2] flex items-center justify-center">
              <svg viewBox="0 0 7 7" className="w-[7px] h-[7px]">
                <path d={d} fill="none" stroke="#222" strokeWidth="1.200" />
              </svg>
            </button>
          ))}
        </div>
      </div>

      {/* Toolbars */}
      <div className="flex flex-col gap-[1px] pl-[2px] pb-[1px] shrink-0">
        <div className="flex gap-[2px]">
          <Group width="w-[218px]">
            <Tools items={['New', 'v', 'Open', 'Save', 'Refresh', 'Print', '|', 'Cut', 'Copy', 'Paste', 'Undo', 'Redo', '|', 'Add item', 'v', 'Find', 'Collapse']} />
          </Group>
          <Group width="w-[66px]">
            <Tools items={['Compile', 'Compile all', 'Simulate', 'Break']} />
          </Group>
          <Group width="w-[264px]">
            <Tools items={['Environment', 'Up', 'Back', 'Forward', '|', 'Restart']} />
            <input
              aria-label="Run length"
              defaultValue="100 ps"
              className='w-[38px] h-[12px] ml-[3px] pr-px text-right text-[8px] text-[#777] bg-[#f0f0f0] border border-[#ddd] border-l-[#888] border-t-[#888] font-["Liberation_Mono",monospace]'
            />
            <button aria-label="Change run length" className="w-[10px] h-[12px] mr-[2px] flex items-center justify-center shrink-0">
              <svg viewBox="0 0 8 12" className="w-[8px] h-[12px]"><path d="m4 1 3 4H1zM4 11 1 7h6z" fill="#222" /></svg>
            </button>
            <Tools items={['Run', 'Continue run', 'Run all', 'Break run', 'Stop', '|']} />
            <Tools items={['Performance profile', 'Memory profile', 'Edit hand']} size="w-[15px]" />
          </Group>
          <Group width="w-[101px]">
            <Tools items={['Step in', 'Step over', 'Step out', '|', 'Step in current', 'Step over current', 'Step out current']} />
          </Group>
          <Group width="w-[96px]">
            <Tools items={['Add bookmark', 'v', 'Delete bookmark', 'v', 'Edit bookmark', 'Manage bookmarks', 'v', 'Jump to bookmark']} />
          </Group>
          <Group width="w-[96px]">
            <Tools items={['Select', 'Zoom mode', 'Pan mode', 'Edit mode', '|', 'Stop drawing']} size="w-[16px]" boxed />
          </Group>
        </div>
        <div className="flex gap-[3px]">
          <Group width="w-[121px]">
            <Tools items={['Insert cursor', 'Delete cursor', 'Previous transition', 'Next transition', 'Previous falling edge', 'Next falling edge', 'Previous rising edge', 'Next rising edge']} />
          </Group>
          <Group width="w-[227px]">
            <Tools items={['Expand drivers', 'v', 'Expand readers', 'v', 'Expand net', '|']} />
            <label htmlFor="search" className="text-[7px] text-[#777] ml-[2px] mr-[4px]">Search:</label>
            <input id="search" className="flex-1 min-w-0 h-[12px] text-[7px] bg-[#f0f0f0] border border-[#ddd] border-l-[#888] border-t-[#888]" />
            <button aria-label="Search history" className="w-[11px] h-[12px] flex items-center justify-center bg-[#ececec] border border-[#bbb] shrink-0">
              <svg viewBox="0 0 8 4" className="w-[8px] h-[4px]"><path d="M0 0h8L4 4z" fill="#555" /></svg>
            </button>
            <span className="w-[2px]" />
            <Tools items={['Find previous', 'Find next', 'Search options']} size="w-[12px]" />
            <span className="w-[5px]" />
          </Group>
          <Group width="w-[77px]">
            <Tools items={['Zoom in', 'Zoom out', 'Zoom full', 'Zoom on cursor', 'Zoom between']} />
          </Group>
          <Group width="w-[121px]">
            <Tools items={['Show cursor', 'Two cursors', 'Full wave']} size="w-[16px]" boxed />
            <Tools items={['|', 'Shaded wave', 'Edge blue', 'Edge green', 'Edge yellow']} />
          </Group>
        </div>
      </div>

      {/* Wave window */}
      <main className="flex-1 grid grid-cols-[100px_63px_1fr_9px] grid-rows-[12px_1fr_68px_12px] gap-x-[2px] gap-y-[2px] bg-[#e6e3e8] pl-[2px] pr-[3px] pt-[1px] pb-[1px] text-[7px] text-white">
        <div className="bg-[#808080] flex items-center pl-[5px] gap-[3px]">
          <svg viewBox="0 0 12 10" className="w-[12px] h-[10px]" aria-hidden="true">
            <path d="m4 0 3 3-3 3-3-3z" fill="#e838d8" />
            <path d="M6 3h5v5H6z" fill="#28b848" />
            <path d="m4 4 3 3-3 3-3-3z" fill="#1a28d8" />
            <circle cx="7" cy="5" r="2" fill="#22d0e8" />
          </svg>
          <button aria-label="Signal options" className="w-[3px] h-[2px] bg-black" />
        </div>
        <div className="bg-[#808080] flex items-center justify-end pr-[2px]">Msgs</div>
        <WavePane />
        <div className="bg-[#808080]" />

        <div className="flex bg-white pl-[5px]">
          <div className="flex-1 bg-[#808080] pr-[2px]">
            {signals.map((s) => (
              <div key={s.name} className="h-[11px] flex items-center gap-[3px] pl-[13px] leading-[11px]">
                <svg viewBox="0 0 10 10" className="w-[9px] h-[9px]" aria-hidden="true">
                  <path d="m5 0 5 5-5 5-5-5z" fill="#1592d4" />
                  <path d="m5 0 5 5H5L0 5z" fill="#5cd0f8" />
                </svg>
                {s.name}
              </div>
            ))}
            <div className="h-px bg-[#333] border-l-2 border-black" />
          </div>
        </div>
        <div className="bg-[#808080] px-[2px]">
          {signals.map((s) => (
            <div key={s.name} className="h-[11px] leading-[11px]">{s.value}</div>
          ))}
          <div className="h-px bg-[#333]" />
        </div>
        <div className="flex flex-col justify-between bg-[#f0f0f0]">
          <button aria-label="Scroll up" className="h-[10px] flex items-center justify-center border border-[#bbb]">
            <svg viewBox="0 0 6 4" className="w-[5px] h-[3px]"><path d="M0 4h6L3 0z" fill="#111" /></svg>
          </button>
          <button aria-label="Scroll down" className="h-[10px] flex items-center justify-center border border-[#bbb]">
            <svg viewBox="0 0 6 4" className="w-[5px] h-[3px]"><path d="M0 0h6L3 4z" fill="#111" /></svg>
          </button>
        </div>

        <div className="bg-[#808080] pl-[5px]">
          <div className="h-[13px] leading-[13px] flex items-center justify-between pr-[6px]">
            <svg viewBox="0 0 24 8" className="w-[24px] h-[8px]" aria-hidden="true">
              <path d="M1 6V4l2-2h4v4z" fill="#4c4c4c" stroke="#aaa" strokeWidth=".6" />
              <path d="M9 1h6v5H9z" fill="#d8e8ff" stroke="#5b8cd0" />
              <circle cx="20" cy="4" r="3.500" fill="#55b848" />
              <path d="M20 2v4M18 4h4" stroke="#fff" />
            </svg>
            <span>Now</span>
          </div>
          {cursors.map((c, i) => (
            <div key={c.name} className="h-[11px] flex leading-[11px]">
              <CursorTools />
              <span className={`flex-1 text-right pr-[5px] ${i === 4 ? 'bg-white text-black' : 'border-b border-[#999]'}`}>{c.name}</span>
            </div>
          ))}
        </div>
        <div className="bg-[#808080] text-right">
          <div className="h-[13px] leading-[13px] pr-[6px]">2523722840 ns</div>
          {cursors.map((c, i) => (
            <div key={c.name} className={`h-[11px] leading-[11px] pr-[6px] ${i === 4 ? 'bg-white text-black' : 'border-b border-[#999]'}`}>
              {c.time} ns
            </div>
          ))}
        </div>
        <CursorPane />
        <div className="bg-[#808080]" />

        <HScroll />
        <HScroll />
        <HScroll dark />
        <div className="bg-[#808080]" />
      </main>

      {/* Status bar */}
      <div className="h-[14px] flex items-center text-[7px] border-t border-[#bbb] text-[#222] shrink-0">
        <span className="w-[108px] pl-[4px] border-r border-[#aaa]">0 ps to 131072 ns</span>
        <span className="pl-[4px] whitespace-pre">Now: 2,530,737,960 ns   Delta: 1</span>
        <svg viewBox="0 0 8 8" className="w-[8px] h-[8px] ml-auto self-end" aria-hidden="true">
          <path d="m0 8 8-8M3 8l5-5M6 8l2-2" stroke="#999" />
        </svg>
      </div>

      <TaskBar />
    </div>
  );
}
